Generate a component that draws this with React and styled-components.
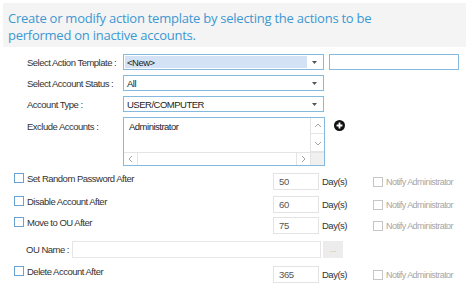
import React from 'react'
import styled, { createGlobalStyle } from 'styled-components'

const GlobalStyle = createGlobalStyle`
  body {
    margin: 0;
    background: #fff;
    font-family: "Liberation Sans", Arial, sans-serif;
  }
`

const options = [
  { label: 'Set Random Password After', days: '50', top: 7 },
  { label: 'Disable Account After', days: '60', top: 6 },
  { label: 'Move to OU After', days: '75', top: 4 },
]

const Arrow = () => (
  <svg width="5" height="3" viewBox="0 0 5 3">
    <path d="M0 0h5L2.5 3z" fill="#555" />
  </svg>
)

const ScrollArrow = ({ dir }) => {
  const paths = {
    up: 'M1 4l3-3 3 3',
    down: 'M1 1l3 3 3-3',
    left: 'M4 1L1 4l3 3',
    right: 'M1 1l3 3-3 3',
  }
  const vertical = dir === 'up' || dir === 'down'
  return (
    <svg width={vertical ? 8 : 5} height={vertical ? 5 : 8} viewBox={vertical ? '0 0 8 5' : '0 0 5 8'}>
      <path d={paths[dir]} fill="none" stroke="#999" strokeWidth="0.9" />
    </svg>
  )
}

const PlusIcon = () => (
  <svg width="11" height="11" viewBox="0 0 11 11">
    <circle cx="5.5" cy="5.5" r="5.5" fill="#111" />
    <path d="M5.5 2.6v5.8M2.6 5.5h5.8" stroke="#fff" strokeWidth="1.8" />
  </svg>
)

const App = () => {
  return (
    <Page>
      <GlobalStyle />
      <Header>
        Create or modify action template by selecting the actions to be
        <br />
        performed on inactive accounts.
      </Header>

      <TopForm>
        <Row>
          <Label>Select Action Template :</Label>
          <Select>
            <Highlight>&lt;New&gt;</Highlight>
            <Caret><Arrow /></Caret>
          </Select>
          <TextBox />
        </Row>
        <Row>
          <Label>Select Account Status :</Label>
          <Select>
            <Value>All</Value>
            <Caret><Arrow /></Caret>
          </Select>
        </Row>
        <Row>
          <Label>Account Type :</Label>
          <Select>
            <Value>USER/COMPUTER</Value>
            <Caret><Arrow /></Caret>
          </Select>
        </Row>
        <ListRow>
          <Label $top>Exclude Accounts :</Label>
          <ListBox>
            <ListMain>
              <ListItems>Administrator</ListItems>
              <VScroll>
                <ScrollBtn $h={15}><ScrollArrow dir="up" /></ScrollBtn>
                <ScrollBtn $h={15}><ScrollArrow dir="down" /></ScrollBtn>
              </VScroll>
            </ListMain>
            <HScroll>
              <HBtn><ScrollArrow dir="left" /></HBtn>
              <HTrack />
              <HBtn><ScrollArrow dir="right" /></HBtn>
              <Corner />
            </HScroll>
          </ListBox>
          <AddButton><PlusIcon /></AddButton>
        </ListRow>
      </TopForm>

      <Options>
        {options.map((o) => (
          <OptionRow key={o.label} $top={o.top}>
            <OptionLeft>
              <Check />
              <CheckLabel>{o.label}</CheckLabel>
            </OptionLeft>
            <NumBox>{o.days}</NumBox>
            <Days>Day(s)</Days>
            <Notify>
              <GreyCheck />
              <NotifyLabel>Notify Administrator</NotifyLabel>
            </Notify>
          </OptionRow>
        ))}
        <OuRow>
          <OuLabel>OU Name :</OuLabel>
          <OuInput />
          <BrowseBtn>...</BrowseBtn>
        </OuRow>
        <OptionRow $top={8}>
          <OptionLeft>
            <Check />
            <CheckLabel>Delete Account After</CheckLabel>
          </OptionLeft>
          <NumBox>365</NumBox>
          <Days>Day(s)</Days>
          <Notify>
            <GreyCheck />
            <NotifyLabel>Notify Administrator</NotifyLabel>
          </Notify>
        </OptionRow>
      </Options>
    </Page>
  )
}

export default App

const Page = styled.div`
  width: 474px;
  height: 295px;
  padding-top: 3px;
  box-sizing: border-box;
  overflow: hidden;
`
const Header = styled.div`
  margin-left: 3px;
  width: 463px;
  height: 44px;
  box-sizing: border-box;
  padding: 7px 5px 0;
  background: #f4f4f4;
  color: #3c98d2;
  font-family: "Open Sans", sans-serif;
  font-size: 13px;
  letter-spacing: -0.25px;
  line-height: 17px;
`
const TopForm = styled.div`
  padding-left: 27px;
  margin-top: 7px;
  display: flex;
  flex-direction: column;
  gap: 5px;
`
const Row = styled.div`
  display: flex;
  align-items: center;
  height: 16px;
`
const ListRow = styled.div`
  display: flex;
  align-items: flex-start;
`
const Label = styled.div`
  width: 96px;
  flex-shrink: 0;
  font-size: 9.5px;
  letter-spacing: -0.5px;
  color: #333;
  white-space: nowrap;
  padding-top: ${(p) => (p.$top ? '4px' : '0')};
`
const Select = styled.div`
  width: 201px;
  height: 16px;
  box-sizing: border-box;
  border: 1px solid #86b9de;
  padding: 1px;
  display: flex;
  align-items: stretch;
`
const Highlight = styled.div`
  flex: 1;
  background: #d4e2f5;
  padding-left: 2px;
  display: flex;
  align-items: center;
  font-size: 9.5px;
  letter-spacing: -0.5px;
  color: #222;
`
const Value = styled(Highlight)`
  background: transparent;
`
const Caret = styled.div`
  width: 15px;
  display: flex;
  align-items: center;
  justify-content: center;
`
const TextBox = styled.div`
  width: 130px;
  height: 16px;
  box-sizing: border-box;
  border: 1px solid #86b9de;
  margin-left: 5px;
`
const ListBox = styled.div`
  width: 202px;
  height: 49px;
  box-sizing: border-box;
  border: 1px solid #86b9de;
  display: flex;
  flex-direction: column;
`
const ListMain = styled.div`
  flex: 1;
  display: flex;
`
const ListItems = styled.div`
  flex: 1;
  padding: 3px 0 0 5px;
  font-size: 9.5px;
  letter-spacing: -0.5px;
  color: #222;
`
const VScroll = styled.div`
  width: 13px;
  border-left: 1px solid #e4e4e4;
  display: flex;
  flex-direction: column;
  gap: 2px;
`
const ScrollBtn = styled.div`
  height: ${(p) => p.$h}px;
  border-bottom: 1px solid #e4e4e4;
  display: flex;
  align-items: center;
  justify-content: center;
`
const HScroll = styled.div`
  height: 13px;
  display: flex;
  border-top: 1px solid #e4e4e4;
`
const HBtn = styled.div`
  width: 13px;
  display: flex;
  align-items: center;
  justify-content: center;
  border-right: 1px solid #e4e4e4;
  &:nth-child(3) {
    border-left: 1px solid #e4e4e4;
  }
`
const HTrack = styled.div`
  flex: 1;
`
const Corner = styled.div`
  width: 13px;
  background: #f0f0f0;
`
const AddButton = styled.div`
  margin: 3px 0 0 9px;
  display: flex;
`
const Options = styled.div`
  display: flex;
  flex-direction: column;
`
const OptionRow = styled.div`
  display: flex;
  align-items: center;
  height: 17px;
  margin-top: ${(p) => p.$top}px;
  padding-left: 14px;
`
const OptionLeft = styled.div`
  width: 259px;
  align-self: flex-start;
  display: flex;
  align-items: center;
  height: 10px;
`
const Check = styled.div`
  width: 10px;
  height: 10px;
  box-sizing: border-box;
  border: 1px solid #6aa3d2;
  flex-shrink: 0;
`
const CheckLabel = styled.div`
  margin-left: 3px;
  font-size: 9.5px;
  letter-spacing: -0.5px;
  color: #333;
  white-space: nowrap;
`
const NumBox = styled.div`
  width: 46px;
  height: 17px;
  box-sizing: border-box;
  border: 1px solid #e3e3e3;
  padding-left: 5px;
  display: flex;
  align-items: center;
  font-size: 9.5px;
  letter-spacing: -0.4px;
  color: #555;
`
const Days = styled.div`
  width: 54px;
  padding-left: 3px;
  box-sizing: border-box;
  font-size: 9.5px;
  letter-spacing: -0.5px;
  color: #333;
`
const Notify = styled.div`
  display: flex;
  align-items: center;
`
const GreyCheck = styled(Check)`
  border-color: #c6c6c6;
`
const NotifyLabel = styled(CheckLabel)`
  font-size: 9px;
  letter-spacing: -0.55px;
  color: #a6a6a6;
`
const OuRow = styled.div`
  display: flex;
  align-items: center;
  height: 17px;
  margin-top: 7px;
  padding-left: 26px;
`
const OuLabel = styled.div`
  width: 46px;
  font-size: 9.5px;
  letter-spacing: -0.5px;
  color: #333;
`
const OuInput = styled.div`
  width: 249px;
  height: 17px;
  box-sizing: border-box;
  border: 1px solid #e6e6e6;
`
const BrowseBtn = styled.div`
  width: 20px;
  height: 17px;
  margin-left: 2px;
  background: #ececec;
  color: #b0b0b0;
  font-size: 8px;
  display: flex;
  align-items: center;
  justify-content: center;
`
